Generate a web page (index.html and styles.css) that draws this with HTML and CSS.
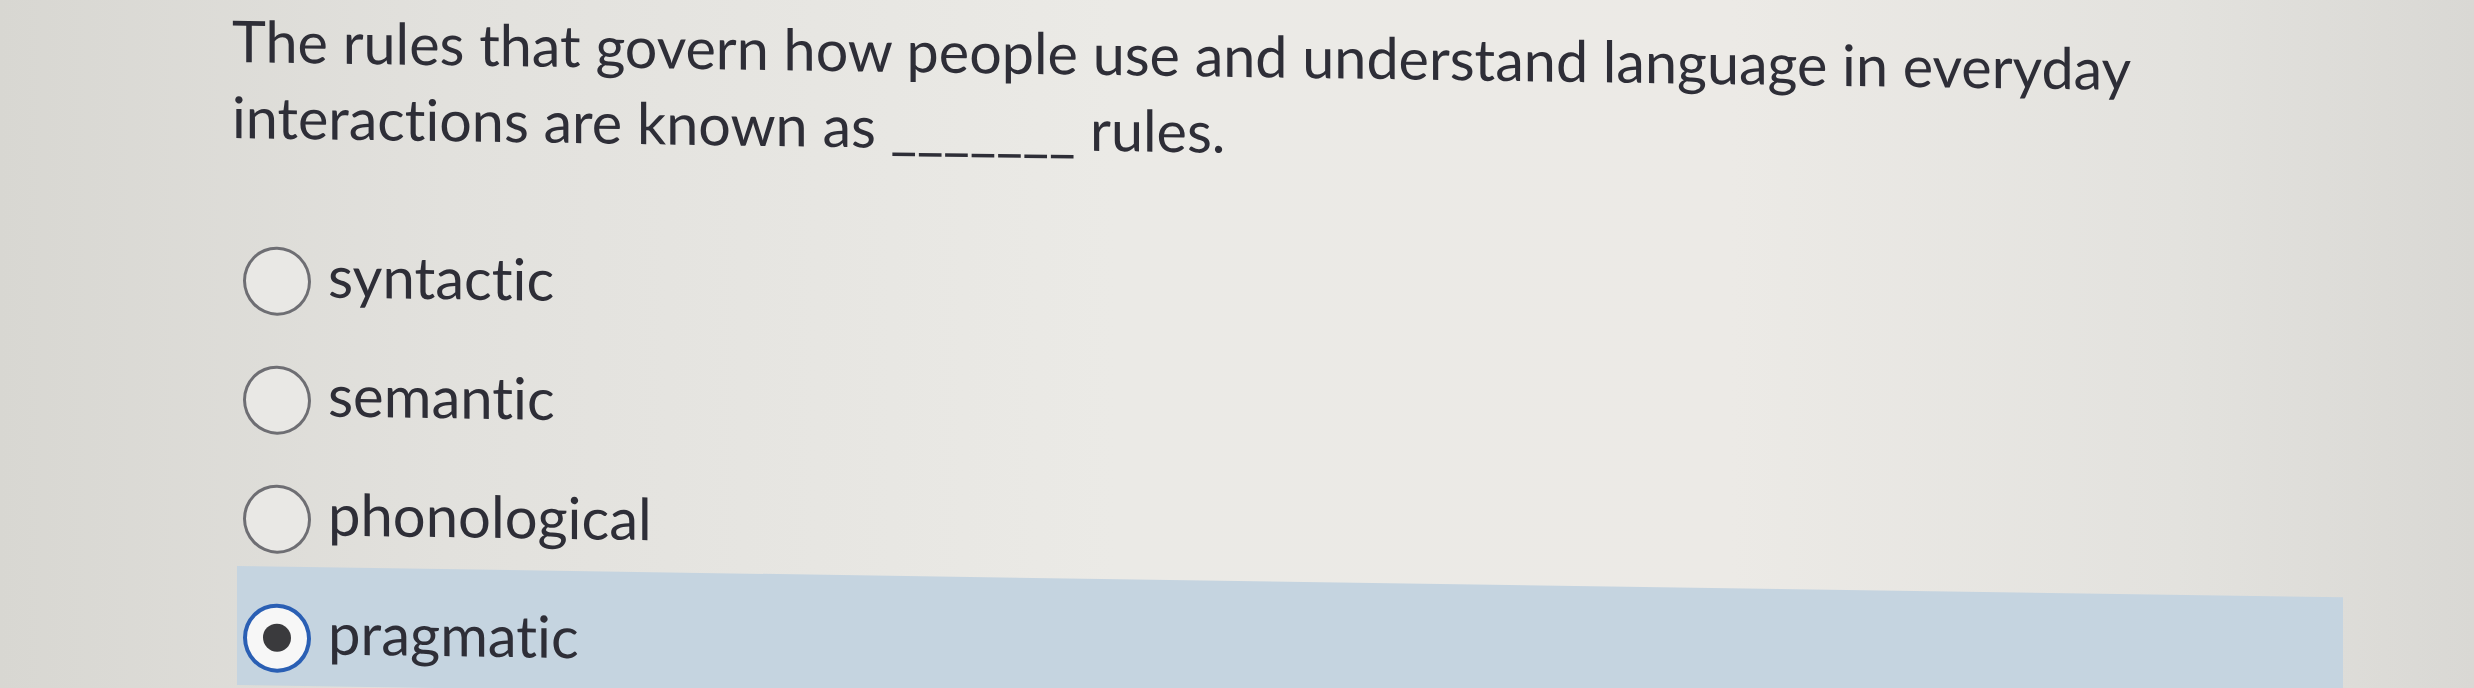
FILE: index.html
```html
<!DOCTYPE html>
<html lang="en">

<head>
    <meta charset="UTF-8">
    <meta name="viewport" content="width=device-width, initial-scale=1.0">
    <title>Question</title>
    <link rel="stylesheet" href="styles.css">
</head>

<body>
    <div class="quiz">
        <p class="stem">The rules that govern how people use and understand language in everyday interactions are known as _______ rules.</p>

        <ul class="options">
            <li class="option">
                <span class="radio"></span>
                <span class="label">syntactic</span>
            </li>
            <li class="option">
                <span class="radio"></span>
                <span class="label">semantic</span>
            </li>
            <li class="option">
                <span class="radio"></span>
                <span class="label">phonological</span>
            </li>
            <li class="option selected">
                <span class="radio"></span>
                <span class="label">pragmatic</span>
            </li>
        </ul>
    </div>
</body>

</html>
```

FILE: styles.css
```css
body {
    margin: 0;
    height: 688px;
    overflow: hidden;
    background: linear-gradient(90deg, #d8d7d2 0%, #e2e1dd 18%, #ebeae6 45%, #eceae6 70%, #e3e2de 88%, #d9d8d4 100%);
    font-family: Lato, "Open Sans", sans-serif;
    font-variant-ligatures: none;
    color: #2e2e37;
}

.quiz {
    padding: 2px 0 0 232px;
    transform: skewY(0.85deg);
    transform-origin: 232px 0;
}

.stem {
    margin: 0;
    width: 2000px;
    font-size: 57.5px;
    line-height: 76px;
}

.options {
    list-style: none;
    margin: 55px 131px 0 5px;
    padding: 0;
}

.option {
    display: flex;
    align-items: center;
    gap: 17px;
    height: 68px;
    padding: 37px 0 14px 6px;
    font-size: 58px;
}

.option .label {
    margin-bottom: 14px;
}

.radio {
    box-sizing: border-box;
    width: 68px;
    height: 69px;
    flex: none;
    border: 3px solid #6e6e73;
    border-radius: 50%;
    background: #e9e8e5;
}

.selected {
    background-color: #c5d4e0;
}

.selected .radio {
    display: flex;
    align-items: center;
    justify-content: center;
    border: 4px solid #2a5fb4;
    background: #f7f7f7;
}

.selected .radio::after {
    content: "";
    width: 28px;
    height: 28px;
    border-radius: 50%;
    background: #3a3a3d;
}
```
